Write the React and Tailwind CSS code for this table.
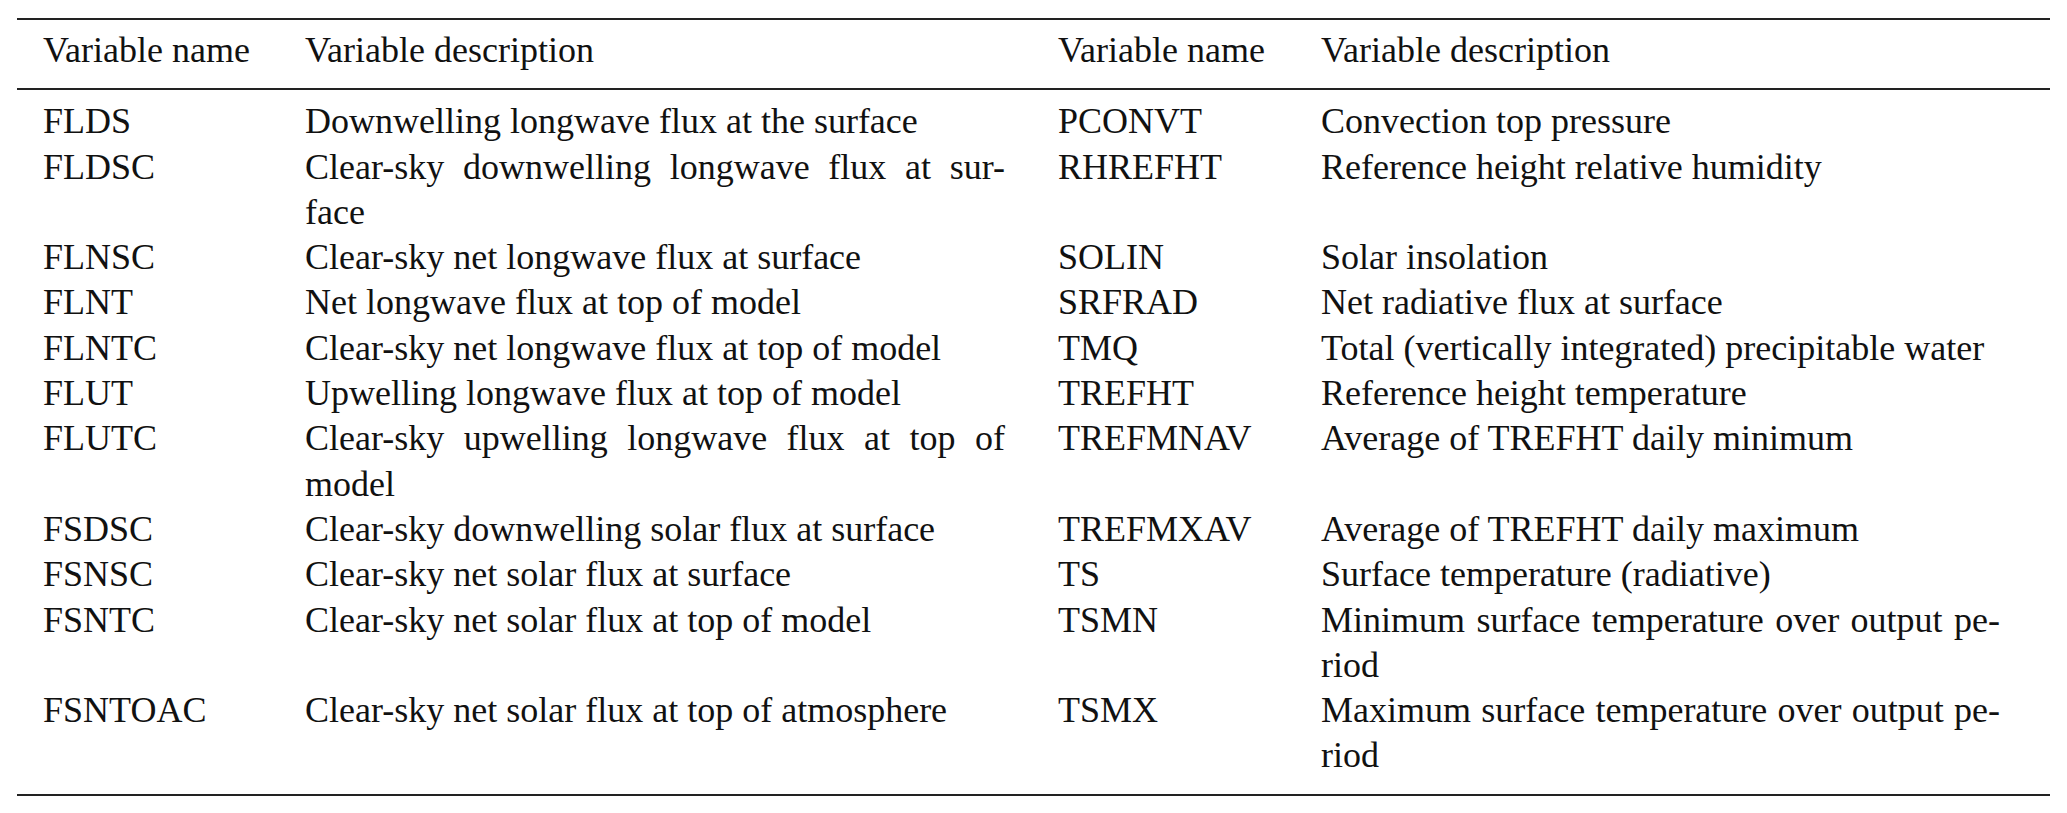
import React from 'react';

const rows = [
    { a: 'FLDS', b: ['Downwelling longwave flux at the surface'], c: 'PCONVT', d: ['Convection top pressure'] },
    { a: 'FLDSC', b: ['Clear-sky downwelling longwave flux at sur-', 'face'], c: 'RHREFHT', d: ['Reference height relative humidity'] },
    { a: 'FLNSC', b: ['Clear-sky net longwave flux at surface'], c: 'SOLIN', d: ['Solar insolation'] },
    { a: 'FLNT', b: ['Net longwave flux at top of model'], c: 'SRFRAD', d: ['Net radiative flux at surface'] },
    { a: 'FLNTC', b: ['Clear-sky net longwave flux at top of model'], c: 'TMQ', d: ['Total (vertically integrated) precipitable water'] },
    { a: 'FLUT', b: ['Upwelling longwave flux at top of model'], c: 'TREFHT', d: ['Reference height temperature'] },
    { a: 'FLUTC', b: ['Clear-sky upwelling longwave flux at top of', 'model'], c: 'TREFMNAV', d: ['Average of TREFHT daily minimum'] },
    { a: 'FSDSC', b: ['Clear-sky downwelling solar flux at surface'], c: 'TREFMXAV', d: ['Average of TREFHT daily maximum'] },
    { a: 'FSNSC', b: ['Clear-sky net solar flux at surface'], c: 'TS', d: ['Surface temperature (radiative)'] },
    { a: 'FSNTC', b: ['Clear-sky net solar flux at top of model'], c: 'TSMN', d: ['Minimum surface temperature over output pe-', 'riod'] },
    { a: 'FSNTOAC', b: ['Clear-sky net solar flux at top of atmosphere'], c: 'TSMX', d: ['Maximum surface temperature over output pe-', 'riod'] },
];

// wrapped lines are justified except the last one
const Lines = ({ lines }) => (
    <div>
        {lines.map((l, i) => (
            <div
                key={i}
                className={i < lines.length - 1 ? 'whitespace-nowrap text-justify [text-align-last:justify]' : 'whitespace-nowrap'}
            >
                {l}
            </div>
        ))}
    </div>
);

const Row = ({ a, b, c, d }) => (
    <div className="flex">
        <div className="w-[262px] shrink-0 whitespace-nowrap">{a}</div>
        <div className="w-[700px] shrink-0"><Lines lines={b} /></div>
        <div className="w-[53px] shrink-0" />
        <div className="w-[263px] shrink-0 whitespace-nowrap">{c}</div>
        <div className="w-[679px] shrink-0"><Lines lines={d} /></div>
    </div>
);

export default function App() {
    return (
        <div className="w-[2067px] h-[813px] bg-white text-[#111] px-[17px] pt-[18px] font-['Liberation_Serif','Times_New_Roman',serif] text-[36px] leading-[45.3px]">
            <div className="h-[2px] bg-[#222]" />
            <div className="pl-[26px] pt-[8px] pb-[15px]">
                <Row a="Variable name" b={['Variable description']} c="Variable name" d={['Variable description']} />
            </div>
            <div className="h-[2px] bg-[#222]" />
            <div className="pl-[26px] pt-[9px] pb-[15px]">
                {rows.map((r) => (
                    <Row key={r.a} {...r} />
                ))}
            </div>
            <div className="h-[2px] bg-[#222]" />
        </div>
    );
}
